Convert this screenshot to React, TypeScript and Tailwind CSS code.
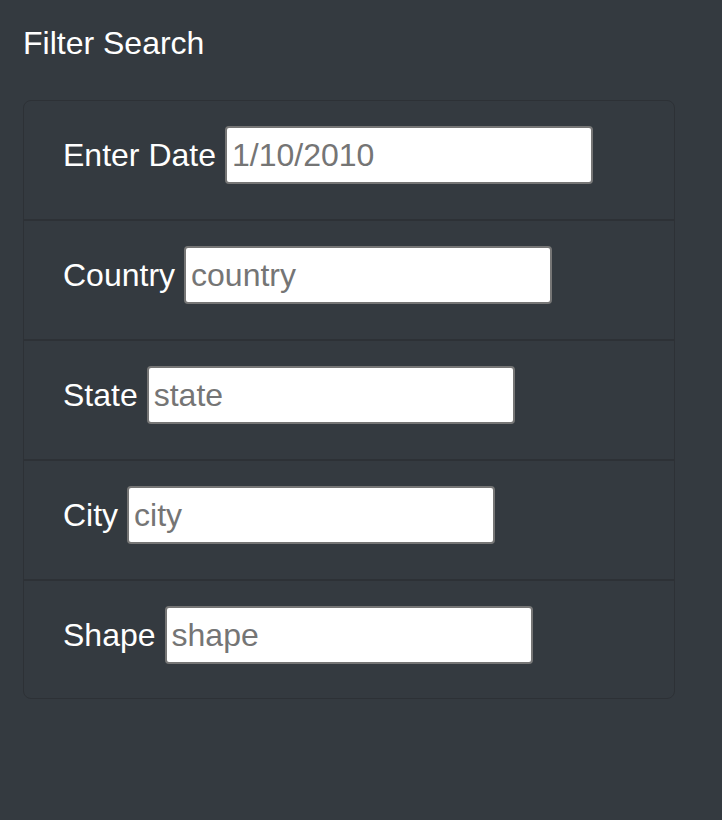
import React from "react";

const rows = [
  { label: "Enter Date", placeholder: "1/10/2010" },
  { label: "Country", placeholder: "country" },
  { label: "State", placeholder: "state" },
  { label: "City", placeholder: "city" },
  { label: "Shape", placeholder: "shape" },
];

export default function App() {
  return (
    <div
      className="w-[722px] h-[820px] bg-[#343a40] text-white overflow-hidden"
      style={{ fontFamily: '"Liberation Sans", Arial, sans-serif' }}
    >
      <div className="pt-[24px] pl-[23px] text-[32px] leading-[38px]">Filter Search</div>
      <div className="ml-[23px] mt-[38px] w-[652px] border-[1.5px] border-[#2d3136] rounded-[8px] overflow-hidden">
        {rows.map((r, i) => (
          <div
            key={r.label}
            className={`${i < rows.length - 1 ? "h-[120px] border-b-2 border-[#2d3136]" : "h-[117px]"} pl-[39px] pt-[25px]`}
          >
            <div className="flex items-center h-[58px]">
              <span className="text-[32px] leading-[38px] text-white">{r.label}</span>
              <input
                placeholder={r.placeholder}
                className="ml-[9px] w-[368px] h-[58px] bg-white border-2 border-[#767676] rounded-[4px] px-[5px] text-[32px] text-black placeholder:text-[#757575] outline-none"
                style={{ fontFamily: '"Liberation Sans", Arial, sans-serif' }}
              />
            </div>
          </div>
        ))}
      </div>
    </div>
  );
}
